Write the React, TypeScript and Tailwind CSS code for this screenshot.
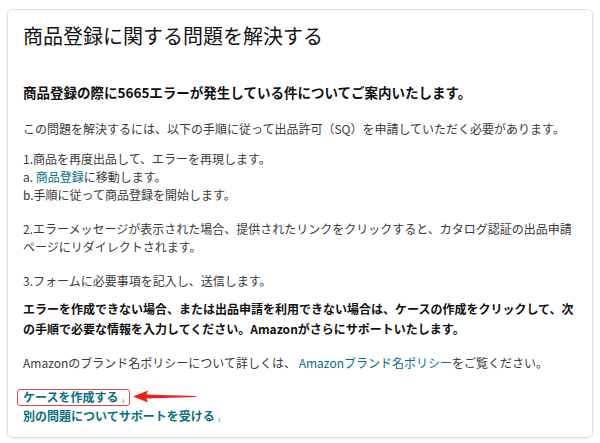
import React from "react";

const font = { fontFamily: '"Noto Sans CJK JP", "Noto Sans", sans-serif' };

export default function App() {
  return (
    <div className="bg-white w-[600px] h-[443px] pt-[9px] px-[7px]" style={font}>
      <div className="border border-[#dedede] rounded-[5px] shadow-[0_1px_2px_rgba(0,0,0,0.06)] pt-[12px] pb-[11px] pl-[15px] pr-[15px] text-[#3a3a3a] text-[12px] leading-[18px]">
        <h1 className="text-[20px] leading-[28px] font-normal text-[#111]">
          商品登録に関する問題を解決する
        </h1>
        <p className="mt-[32px] text-[13.5px] leading-[20px] font-bold text-[#111]">
          商品登録の際に5665エラーが発生している件についてご案内いたします。
        </p>
        <p className="mt-[18px]">
          この問題を解決するには、以下の手順に従って出品許可（SQ）を申請していただく必要があります。
        </p>
        <div className="mt-[12px]">
          <div>1.商品を再度出品して、エラーを再現します。</div>
          <div>
            a. <span className="text-[#007185]">商品登録</span>に移動します。
          </div>
          <div>b.手順に従って商品登録を開始します。</div>
        </div>
        <p className="mt-[16px]">
          2.エラーメッセージが表示された場合、提供されたリンクをクリックすると、カタログ認証の出品申請ページにリダイレクトされます。
        </p>
        <p className="mt-[16px]">3.フォームに必要事項を記入し、送信します。</p>
        <p className="mt-[9px] font-bold text-[#111] leading-[20px]">
          エラーを作成できない場合、または出品申請を利用できない場合は、ケースの作成をクリックして、次の手順で必要な情報を入力してください。Amazonがさらにサポートいたします。
        </p>
        <p className="mt-[15px]">
          Amazonのブランド名ポリシーについて詳しくは、 <span className="text-[#007185]">Amazonブランド名ポリシー</span>をご覧ください。
        </p>
        <div className="mt-[16px] flex flex-col items-start font-bold text-[#0b6f80]">
          <div className="relative">
            <span>ケースを作成する</span>
            <span className="text-[10px] font-normal text-[#6b8a90] ml-[3px] relative top-[2px]">›</span>
            <span className="absolute left-[-6px] right-[-6px] top-[1px] bottom-[1px] border-[1.5px] border-[#e5484d] rounded-[3px]"></span>
            <svg
              className="absolute left-[110px] top-[2px]"
              width="64"
              height="13"
              viewBox="0 0 64 13"
            >
              <path
                d="M0 6.5 L15 0.5 L13.5 4.6 L63 5.9 L63 7.1 L13.5 8.4 L15 12.5 Z"
                fill="#e8231d"
              />
            </svg>
          </div>
          <div>
            <span>別の問題についてサポートを受ける</span>
            <span className="text-[10px] font-normal text-[#6b8a90] ml-[3px] relative top-[2px]">›</span>
          </div>
        </div>
      </div>
    </div>
  );
}
